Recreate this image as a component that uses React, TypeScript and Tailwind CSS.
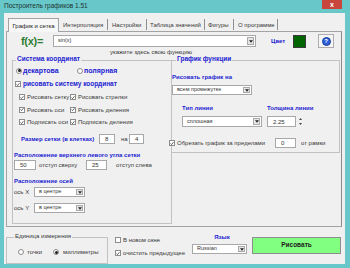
import React from 'react';

const Check = ({ on = true }: { on?: boolean }) => (
  <span className="inline-flex w-[6px] h-[6px] shrink-0 items-center justify-center border border-[#8c8c8c] bg-white">
    {on && (
      <svg viewBox="0 0 6 6" className="w-[5px] h-[5px]">
        <path d="M0.8 3 L2.3 4.6 L5.2 1.1" stroke="#2b2b2b" strokeWidth="1.1" fill="none" />
      </svg>
    )}
  </span>
);

const Radio = ({ on = false }: { on?: boolean }) => (
  <span className="inline-flex w-[6px] h-[6px] shrink-0 items-center justify-center rounded-full border border-[#8c8c8c] bg-white">
    {on && <span className="w-[3px] h-[3px] rounded-full bg-[#1e1e1e]" />}
  </span>
);

const Arrow = () => (
  <span className="flex w-[7px] my-[1px] mr-[1px] items-center justify-center border border-[#a9a9a9] bg-[#e6e6e6]">
    <svg viewBox="0 0 6 4" className="w-[4px] h-[3px]">
      <path d="M0 0 H6 L3 4 Z" fill="#222" />
    </svg>
  </span>
);

const Select = ({ text, cls }: { text: string; cls: string }) => (
  <div className={`flex items-stretch border border-[#a8a8a8] bg-white ${cls}`}>
    <span className="flex flex-1 items-center pl-[4px] text-[5.5px] leading-none text-[#333] whitespace-nowrap">{text}</span>
    <Arrow />
  </div>
);

const Field = ({ text, cls }: { text: string; cls: string }) => (
  <div className={`flex items-center border border-[#a8a8a8] bg-white pl-[5px] text-[6px] leading-none text-[#333] ${cls}`}>{text}</div>
);

const blue = 'font-bold text-[#2222d2] leading-none whitespace-nowrap';
const small = 'text-[6px] text-[#383838] leading-none whitespace-nowrap';

const tabs = [
  { t: 'Интерполяция', c: 'w-[49px] pl-[4px]' },
  { t: 'Настройки', c: 'w-[39px] pl-[4px]' },
  { t: 'Таблица значений', c: 'w-[58px] pl-[3px]' },
  { t: 'Фигуры', c: 'w-[29px] pl-[3px]' },
  { t: 'О программе', c: 'w-[44px] pl-[4px]' },
];

export default function App() {
  return (
    <div className="w-[350px] h-[268px] overflow-hidden bg-[#68c7c8] flex flex-col font-['Liberation_Sans',Arial,sans-serif]">
      {/* title bar */}
      <div className="h-[13px] flex items-start justify-between pl-[4px] pr-[8px]">
        <span className="mt-[3px] text-[6.5px] leading-none text-[#1d3434] whitespace-nowrap">Построитель графиков 1.51</span>
        <span className="w-[20px] h-[9px] flex items-center justify-center bg-[#c8463c] text-[7px] leading-none text-white font-bold">x</span>
      </div>

      {/* client area */}
      <div className="mx-[4px] w-[341px] h-[251px] bg-[#f0f0f0] flex flex-col">
        {/* tab strip */}
        <div className="h-[18px] pt-[5px] pl-[4px] flex items-end">
          <div className="relative z-10 -mb-[1px] w-[51px] h-[14px] flex items-center justify-center border border-b-0 border-[#a3a3a3] bg-[#f7f7f7] text-[6px] leading-none text-[#222] whitespace-nowrap">
            График и сетка
          </div>
          {tabs.map((x) => (
            <div key={x.t} className={`h-[11px] mb-[1px] flex items-center border-r border-[#8f8f8f] ${small} ${x.c}`}>
              {x.t}
            </div>
          ))}
        </div>

        {/* tab panel */}
        <div className="ml-[2px] w-[336px] h-[196px] border border-[#a3a3a3] border-r-[#8a8a8a] flex flex-col">
          {/* function row */}
          <div className="mt-[2px] h-[14px] flex items-center">
            <span className="ml-[14px] w-[32px] text-[11px] font-bold leading-none text-[#2f7d32] tracking-[-0.3px]">f(x)=</span>
            <div className="w-[203px] h-[12px] flex items-stretch border border-[#a8a8a8] bg-white">
              <span className="flex flex-1 items-center pl-[4px] text-[5.5px] leading-none text-[#333]">sin(x)</span>
              <Arrow />
            </div>
            <span className={`ml-[15px] w-[22px] text-[6px] ${blue}`}>Цвет</span>
            <span className="w-[13px] h-[13px] bg-[#006400] border border-[#3a3a3a]" />
            <div className="ml-[12px] w-[16px] h-[14px] flex items-center justify-center border border-[#adadad] bg-[#f6f6f6]">
              <span className="w-[9px] h-[9px] rounded-full bg-[#2d5fd8] border border-[#1c3f9e] flex items-center justify-center text-[6px] font-bold leading-none text-white">?</span>
            </div>
          </div>
          <div className={`h-[7px] pl-[103px] flex items-center ${small}`}>укажите здесь свою функцию</div>

          {/* groups */}
          <div className="mt-[1px] flex items-start">
            <fieldset className="ml-[5px] w-[160px] h-[168px] border border-[#c2c2c2] flex flex-col">
              <legend className={`ml-[3px] px-[1px] text-[6.5px] h-[8px] leading-[8px] ${blue}`}>Система координат</legend>
              <div className="h-[13px] pl-[3px] flex items-center">
                <span className="w-[61px] flex items-center gap-[1px]">
                  <Radio on />
                  <span className={`text-[7px] ${blue}`}>декартова</span>
                </span>
                <span className="flex items-center gap-[1px]">
                  <Radio />
                  <span className={`text-[7px] ${blue}`}>полярная</span>
                </span>
              </div>
              <div className="h-[14px] pl-[2px] flex items-center gap-[2px]">
                <Check />
                <span className={`text-[6.5px] ${blue}`}>рисовать систему координат</span>
              </div>
              {[
                ['Рисовать сетку', 'Рисовать стрелки', 'h-[12px]'],
                ['Рисовать оси', 'Рисовать деления', 'h-[13px]'],
                ['Подписать оси', 'Подписать деления', 'h-[12px]'],
              ].map(([a, b, h]) => (
                <div key={a} className={`${h} pl-[6px] flex items-center`}>
                  <span className="w-[51px] flex items-center gap-[2px]">
                    <Check />
                    <span className={small}>{a}</span>
                  </span>
                  <span className="flex items-center gap-[2px]">
                    <Check />
                    <span className={small}>{b}</span>
                  </span>
                </div>
              ))}
              <div className="h-[22px] pl-[8px] flex items-center">
                <span className={`w-[78px] text-[6px] ${blue}`}>Размер сетки (в клетках)</span>
                <Field text="8" cls="w-[16px] h-[10px]" />
                <span className={`ml-[6px] w-[8px] ${small}`}>на</span>
                <Field text="4" cls="w-[15px] h-[10px]" />
              </div>
              <div className={`h-[9px] pl-[1px] flex items-center text-[6px] ${blue}`}>Расположение верхнего левого угла сетки</div>
              <div className="h-[12px] pl-[1px] flex items-center">
                <Field text="50" cls="w-[22px] h-[10px]" />
                <span className={`ml-[3px] w-[47px] ${small}`}>отступ сверху</span>
                <Field text="25" cls="w-[21px] h-[10px]" />
                <span className={`ml-[9px] ${small}`}>отступ слева</span>
              </div>
              <div className={`mt-[5px] h-[10px] pl-[1px] flex items-center text-[6px] ${blue}`}>Расположение осей</div>
              <div className="h-[12px] pl-[1px] flex items-center">
                <span className={`w-[20px] ${small}`}>ось X</span>
                <Select text="в центре" cls="w-[51px] h-[10px]" />
              </div>
              <div className="h-[20px] pl-[1px] flex items-center">
                <span className={`w-[20px] ${small}`}>ось Y</span>
                <Select text="в центре" cls="w-[51px] h-[10px]" />
              </div>
            </fieldset>

            <fieldset className="w-[168px] h-[97px] border border-l-0 border-[#c2c2c2] flex flex-col">
              <legend className={`ml-[4px] px-[1px] text-[6.5px] h-[8px] leading-[8px] ${blue}`}>График функции</legend>
              <div className={`mt-[7px] h-[12px] flex items-center text-[6px] ${blue}`}>Рисовать график на</div>
              <div className="h-[14px] flex items-center">
                <Select text="всем промежутке" cls="w-[80px] h-[10px]" />
              </div>
              <div className="mt-[5px] h-[12px] pl-[10px] flex items-center">
                <span className={`w-[85px] text-[6px] ${blue}`}>Тип линии</span>
                <span className={`text-[6px] ${blue}`}>Толщина линии</span>
              </div>
              <div className="h-[15px] pl-[10px] flex items-center">
                <Select text="сплошная" cls="w-[80px] h-[11px]" />
                <Field text="2.25" cls="ml-[5px] w-[29px] h-[11px]" />
                <span className="ml-[1px] w-[6px] h-[11px] flex flex-col items-center justify-around">
                  <svg viewBox="0 0 6 4" className="w-[3px] h-[2px]"><path d="M3 0 L6 4 H0 Z" fill="#444" /></svg>
                  <svg viewBox="0 0 6 4" className="w-[3px] h-[2px]"><path d="M0 0 H6 L3 4 Z" fill="#444" /></svg>
                </span>
              </div>
              <div className="mt-[8px] h-[12px] -ml-[3px] flex items-center">
                <span className="w-[106px] flex items-center gap-[2px]">
                  <Check />
                  <span className={small}>Обрезать график за пределами</span>
                </span>
                <Field text="0" cls="w-[21px] h-[10px]" />
                <span className={`ml-[5px] ${small}`}>от рамки</span>
              </div>
            </fieldset>
          </div>
        </div>

        {/* bottom area */}
        <div className="flex items-start">
          <fieldset className="ml-[2px] mt-[6px] w-[102px] h-[31px] border border-[#c2c2c2] flex flex-col">
            <legend className={`ml-[7px] px-[1px] h-[8px] leading-[8px] ${small}`}>Единица измерения</legend>
            <div className="mt-[5px] h-[12px] pl-[11px] flex items-center">
              <span className="w-[35px] flex items-center gap-[3px]">
                <Radio />
                <span className={small}>точки</span>
              </span>
              <span className="flex items-center gap-[4px]">
                <Radio on />
                <span className={small}>миллиметры</span>
              </span>
            </div>
          </fieldset>
          <div className="ml-[7px] mt-[9px] w-[77px] flex flex-col gap-[5px]">
            <div className="h-[8px] flex items-center gap-[2px]">
              <Check on={false} />
              <span className={small}>В новом окне</span>
            </div>
            <div className="h-[8px] flex items-center gap-[2px]">
              <Check />
              <span className={small}>очистить предыдущее</span>
            </div>
          </div>
          <div className="mt-[6px] w-[55px] flex flex-col">
            <div className={`h-[8px] pl-[5px] flex items-center justify-center text-[6px] ${blue}`}>Язык</div>
            <Select text="Russian" cls="mt-[3px] w-[55px] h-[10px]" />
          </div>
          <button className="ml-[5px] mt-[10px] w-[89px] h-[17px] flex items-center justify-center border border-[#8e8e8e] bg-[#80ff80] text-[6.5px] font-bold leading-none text-[#1c1c1c]">
            Рисовать
          </button>
        </div>
      </div>
    </div>
  );
}
